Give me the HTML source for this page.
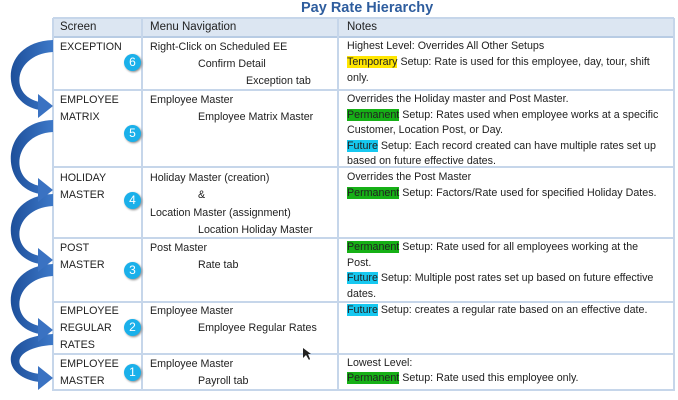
<!DOCTYPE html>
<html><head><style>
body{margin:0;width:678px;height:400px;background:#fff;position:relative;overflow:hidden;font-family:"Liberation Sans",sans-serif;font-size:10.7px;color:#222}
.t{position:absolute;white-space:nowrap;line-height:13px}
.h{position:absolute;left:53px;width:621px;height:18px;top:18px;background:#dce6f2;border-bottom:2px solid #b8cce4}
.hl{position:absolute;left:53px;width:621px;height:2px;background:#c6d6ea}
.vl{position:absolute;top:18px;height:373px;width:2px;background:#c6d6ea}
.y{background:#ffe600}.g{background:#16b016}.b{background:#16c8f0}
.c{position:absolute;width:17px;height:17px;border-radius:50%;background:#1ab0ea;color:#fff;font-size:12px;text-align:center;line-height:17px;box-shadow:1px 1px 2px #888}
</style></head><body>
<div class="t" style="left:301px;top:0px;font-size:14.5px;font-weight:bold;color:#2e5d9e;line-height:16px">Pay Rate Hierarchy</div>
<div class="h"></div>
<div class="hl" style="top:17px"></div>
<div class="hl" style="top:89px"></div>
<div class="hl" style="top:166px"></div>
<div class="hl" style="top:237px"></div>
<div class="hl" style="top:301px"></div>
<div class="hl" style="top:353px"></div>
<div class="hl" style="top:389px"></div>
<div class="vl" style="left:52px"></div>
<div class="vl" style="left:141px"></div>
<div class="vl" style="left:337px"></div>
<div class="vl" style="left:673px"></div>
<div class="t" style="left:60px;top:21px;font-size:11.5px">Screen</div>
<div class="t" style="left:150px;top:21px;font-size:11.5px">Menu Navigation</div>
<div class="t" style="left:347px;top:21px;font-size:11.5px">Notes</div>

<div class="t" style="left:60px;top:41px">EXCEPTION</div>
<div class="t" style="left:150px;top:41px">Right-Click on Scheduled EE</div>
<div class="t" style="left:198px;top:58px">Confirm Detail</div>
<div class="t" style="left:246px;top:75px">Exception tab</div>
<div class="t" style="left:347px;top:40px">Highest Level: Overrides All Other Setups</div>
<div class="t" style="left:347px;top:56px"><span class="y">Temporary</span> Setup: Rate is used for this employee, day, tour, shift</div>
<div class="t" style="left:347px;top:72px">only.</div>

<div class="t" style="left:60px;top:94px">EMPLOYEE</div>
<div class="t" style="left:60px;top:111px">MATRIX</div>
<div class="t" style="left:150px;top:94px">Employee Master</div>
<div class="t" style="left:198px;top:111px">Employee Matrix Master</div>
<div class="t" style="left:347px;top:93px">Overrides the Holiday master and Post Master.</div>
<div class="t" style="left:347px;top:109px"><span class="g">Permanent</span> Setup: Rates used when employee works at a specific</div>
<div class="t" style="left:347px;top:124px">Customer, Location Post, or Day.</div>
<div class="t" style="left:347px;top:140px"><span class="b">Future</span> Setup: Each record created can have multiple rates set up</div>
<div class="t" style="left:347px;top:155px">based on future effective dates.</div>

<div class="t" style="left:60px;top:172px">HOLIDAY</div>
<div class="t" style="left:60px;top:189px">MASTER</div>
<div class="t" style="left:150px;top:172px">Holiday Master (creation)</div>
<div class="t" style="left:198px;top:189px">&amp;</div>
<div class="t" style="left:150px;top:207px">Location Master (assignment)</div>
<div class="t" style="left:198px;top:224px">Location Holiday Master</div>
<div class="t" style="left:347px;top:171px">Overrides the Post Master</div>
<div class="t" style="left:347px;top:187px"><span class="g">Permanent</span> Setup: Factors/Rate used for specified Holiday Dates.</div>

<div class="t" style="left:60px;top:242px">POST</div>
<div class="t" style="left:60px;top:259px">MASTER</div>
<div class="t" style="left:150px;top:242px">Post Master</div>
<div class="t" style="left:198px;top:259px">Rate tab</div>
<div class="t" style="left:347px;top:241px"><span class="g">Permanent</span> Setup: Rate used for all employees working at the</div>
<div class="t" style="left:347px;top:257px">Post.</div>
<div class="t" style="left:347px;top:272px"><span class="b">Future</span> Setup: Multiple post rates set up based on future effective</div>
<div class="t" style="left:347px;top:288px">dates.</div>

<div class="t" style="left:60px;top:305px">EMPLOYEE</div>
<div class="t" style="left:60px;top:322px">REGULAR</div>
<div class="t" style="left:60px;top:339px">RATES</div>
<div class="t" style="left:150px;top:305px">Employee Master</div>
<div class="t" style="left:198px;top:322px">Employee Regular Rates</div>
<div class="t" style="left:347px;top:304px"><span class="b">Future</span> Setup: creates a regular rate based on an effective date.</div>

<div class="t" style="left:60px;top:358px">EMPLOYEE</div>
<div class="t" style="left:60px;top:375px">MASTER</div>
<div class="t" style="left:150px;top:358px">Employee Master</div>
<div class="t" style="left:198px;top:375px">Payroll tab</div>
<div class="t" style="left:347px;top:357px">Lowest Level:</div>
<div class="t" style="left:347px;top:372px"><span class="g">Permanent</span> Setup: Rate used this employee only.</div>

<div class="c" style="left:124px;top:54px">6</div>
<div class="c" style="left:124px;top:125px">5</div>
<div class="c" style="left:124px;top:192px">4</div>
<div class="c" style="left:124px;top:262px">3</div>
<div class="c" style="left:124px;top:319px">2</div>
<div class="c" style="left:124px;top:364px">1</div>

<svg style="position:absolute;left:0;top:0" width="60" height="400">
<defs><linearGradient id="a" x1="0" x2="1"><stop offset="0" stop-color="#1d4f9a"/><stop offset="1" stop-color="#3d78c8"/></linearGradient></defs>
<g fill="url(#a)">
<path d="M53,40 L53,52 C14,54 8,96 40,102 L40,110 C0,104 -2,42 53,40 Z"/>
<path d="M53,120 L53,132 C14,134 8,180 40,186 L40,194 C0,188 -2,122 53,120 Z"/>
<path d="M53,194 L53,206 C14,208 8,250 40,256 L40,264 C0,258 -2,196 53,194 Z"/>
<path d="M53,264 L53,276 C14,278 8,320 40,326 L40,334 C0,328 -2,266 53,264 Z"/>
<path d="M53,334 L53,345 C14,347 8,370 40,374 L40,382 C0,378 -2,336 53,334 Z"/>
</g>
<g fill="#3a72c2">
<polygon points="38,94 53,106 38,118"/>
<polygon points="38,178 53,190 38,202"/>
<polygon points="38,248 53,260 38,272"/>
<polygon points="38,318 53,330 38,342"/>
<polygon points="38,366 53,378 38,390"/>
</g>
</svg>
<svg style="position:absolute;left:302px;top:347px" width="10" height="14"><path d="M1,1 L1,11 L4,8 L7,13 L8,12 L6,7 L9,7 Z" fill="#222"/></svg>
</body></html>
